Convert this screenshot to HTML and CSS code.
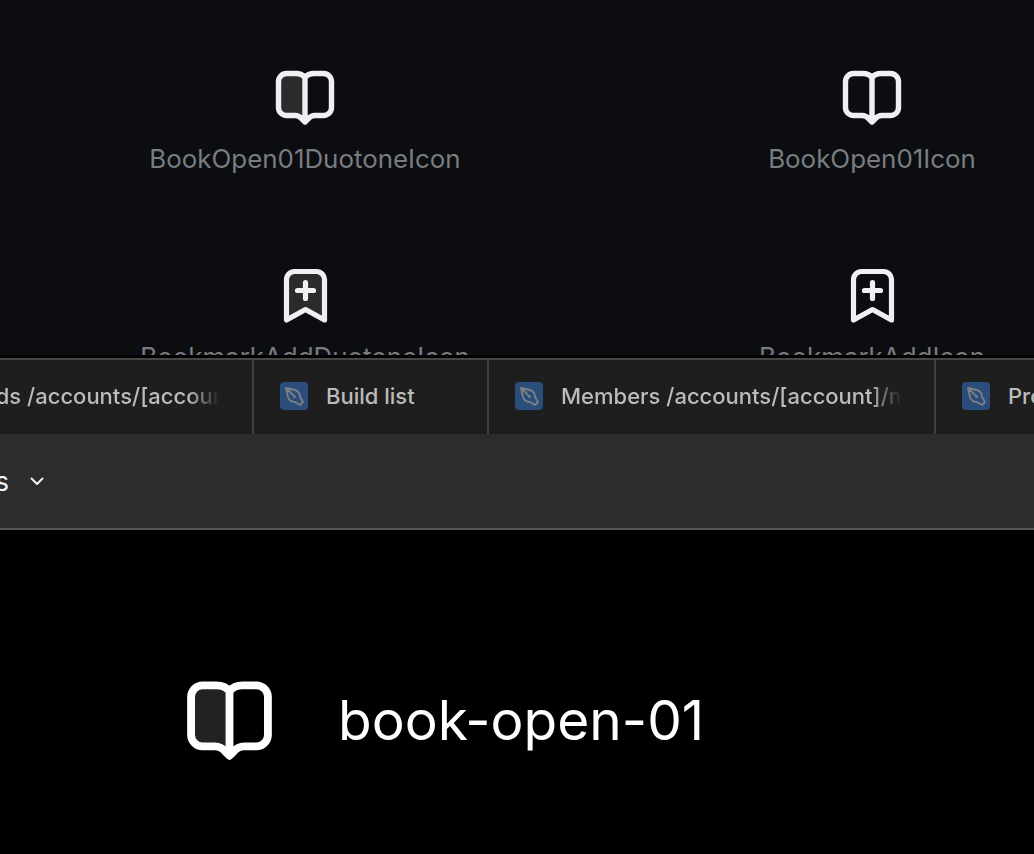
FILE: index.html
```html
<!DOCTYPE html>
<html lang="en">
<head>
<meta charset="utf-8">
<title>Icons</title>
<link rel="stylesheet" href="styles.css">
</head>
<body>
<svg class="defs" width="0" height="0" aria-hidden="true">
  <symbol id="book" viewBox="0 0 60 60">
    <path fill="none" stroke="currentColor" stroke-width="5.4" stroke-linejoin="round" d="M30 10.500C28 8 25 6.500 21 6.500H11.500a8 8 0 0 0-8 8V40.500a8 8 0 0 0 8 8H20c3 0 5 1 7 3.500L30 55L33 52c2-2.500 4-3.500 7-3.500h8.500a8 8 0 0 0 8-8V14.500a8 8 0 0 0-8-8H39C35 6.500 32 8 30 10.500V52"/>
  </symbol>
  <symbol id="book-fill" viewBox="0 0 60 60">
    <path fill="currentColor" d="M30 10.500C28 8 25 6.500 21 6.500H11.500a8 8 0 0 0-8 8V40.500a8 8 0 0 0 8 8H20c3 0 5 1 7 3.500L30 52Z"/>
  </symbol>
  <symbol id="bookmark" viewBox="0 0 60 60">
    <path fill="none" stroke="currentColor" stroke-width="5.2" stroke-linejoin="round" d="M11.500 55V14.500a8 8 0 0 1 8-8h22a8 8 0 0 1 8 8V55L30.500 44.500Z"/>
    <path fill="none" stroke="currentColor" stroke-width="5.200" stroke-linecap="round" d="M30.500 17.500v16M22.500 25.500h16"/>
  </symbol>
  <symbol id="bookmark-fill" viewBox="0 0 60 60">
    <path fill="currentColor" d="M11.500 55V14.500a8 8 0 0 1 8-8h22a8 8 0 0 1 8 8V55L30.500 44.500Z"/>
  </symbol>
  <symbol id="nib" viewBox="0 0 28 28">
    <path fill="none" stroke="currentColor" stroke-width="1.900" stroke-linejoin="round" d="M6 6L15 8C18 9 20 12 20 15L23 20L20 23L15 20C12 20 9 18 8 15ZM6 6L13.500 13.500"/>
    <circle cx="14.500" cy="14.500" r="1.500" fill="currentColor"/>
  </symbol>
</svg>

<div class="browser">
  <section class="icon-grid">
    <div class="icon-cell">
      <svg class="icon"><use href="#book-fill" class="duo"/><use href="#book"/></svg>
      <span class="icon-name">BookOpen01DuotoneIcon</span>
    </div>
    <div class="icon-cell">
      <svg class="icon"><use href="#book"/></svg>
      <span class="icon-name">BookOpen01Icon</span>
    </div>
    <div class="icon-cell">
      <svg class="icon"><use href="#bookmark-fill" class="duo"/><use href="#bookmark"/></svg>
      <span class="icon-name">BookmarkAddDuotoneIcon</span>
    </div>
    <div class="icon-cell">
      <svg class="icon"><use href="#bookmark"/></svg>
      <span class="icon-name">BookmarkAddIcon</span>
    </div>
  </section>

  <nav class="tabs">
    <div class="tab tab-first">
      <span class="tab-logo"><svg><use href="#nib"/></svg></span>
      <span class="tab-title">Builds /accounts/[account]/builds</span>
    </div>
    <div class="tab tab-short">
      <span class="tab-logo"><svg><use href="#nib"/></svg></span>
      <span class="tab-title">Build list</span>
    </div>
    <div class="tab tab-long">
      <span class="tab-logo"><svg><use href="#nib"/></svg></span>
      <span class="tab-title">Members /accounts/[account]/members</span>
    </div>
    <div class="tab tab-last">
      <span class="tab-logo"><svg><use href="#nib"/></svg></span>
      <span class="tab-title">Projects /accounts/[account]/projects</span>
    </div>
  </nav>

  <div class="toolbar">
    <span class="toolbar-label">Projects</span>
    <svg class="chevron" viewBox="0 0 14 9"><path d="M1.500 1.500L7 7l5.500-5.500"/></svg>
  </div>

  <footer class="preview">
    <svg class="preview-icon"><use href="#book-fill" class="duo"/><use href="#book"/></svg>
    <span class="preview-name">book-open-01</span>
  </footer>
</div>
</body>
</html>
```

FILE: styles.css
```css
*{margin:0;padding:0;box-sizing:border-box}
html,body{height:100%;background:#000;overflow:hidden}
body{font-family:Inter,"Liberation Sans",sans-serif}
.defs{display:block;height:0}
.browser{width:1034px;height:854px;overflow:hidden;display:flex;flex-direction:column}

.icon-grid{height:355px;flex:none;overflow:hidden;background:#0b0d10;display:grid;grid-template-columns:567px 567px;grid-auto-rows:198px;padding:67px 0 0 21.500px}
.icon-cell{display:flex;flex-direction:column;align-items:center;color:#eff0f2}
.icon{width:60px;height:60px;display:block}
.duo{color:#2a2b2d}
.icon-name{margin-top:16px;font-size:25.900px;line-height:32px;color:#797c80;white-space:nowrap}

.tabs{flex:none;height:76px;margin-top:3px;background:#1e1e1e;border-top:2px solid #474747;display:flex;overflow:hidden}
.tab{flex:none;display:flex;align-items:center;height:100%;padding-left:26px;gap:18px;border-right:2px solid #3f3f3f;padding-bottom:2px}
.tab-first{width:369px;margin-left:-115px}
.tab-short{width:235px}
.tab-long{width:447px}
.tab-last{width:300px;border-right:0}
.tab-logo{flex:none;width:28px;height:28px;background:#2a4d7c;border-radius:4px;color:#7c7f83}
.tab-logo svg{width:28px;height:28px;display:block}
.tab-title{font-size:22px;font-weight:500;color:#bbb;white-space:nowrap;overflow:hidden;flex:1;min-width:0;margin-right:32px}
.tab-first .tab-title,.tab-long .tab-title{-webkit-mask-image:linear-gradient(to left,transparent,#000 32px);mask-image:linear-gradient(to left,transparent,#000 32px)}

.toolbar{flex:none;height:96px;background:#2c2c2c;border-bottom:2px solid #555;display:flex;align-items:center;margin-left:-100px;gap:21px}
.toolbar-label{font-size:26px;color:#f2f2f2;width:109px;text-align:right;white-space:nowrap;direction:rtl}
.chevron{width:14px;height:9px;fill:none;stroke:#f2f2f2;stroke-width:2;stroke-linecap:round;stroke-linejoin:round}

.preview{flex:1;background:#000;display:flex;align-items:center;gap:65px;padding:56px 0 0 186px;color:#fff}
.preview-icon{width:87px;height:87px;display:block;margin-bottom:2px}
.preview-icon .duo{color:#222}
.preview-name{font-size:55px;line-height:64px;white-space:nowrap}
```
